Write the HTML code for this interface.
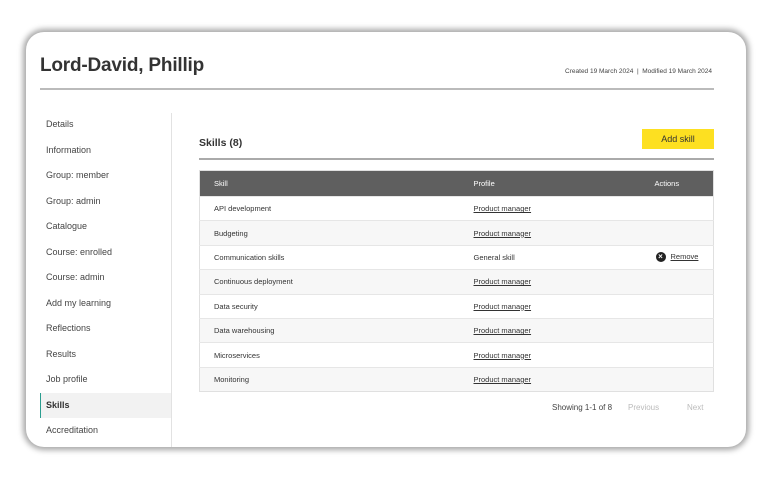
<!DOCTYPE html>
<html><head><meta charset="utf-8"><style>
*{margin:0;padding:0;box-sizing:border-box}
body{width:780px;height:478px;background:#fff;font-family:"Liberation Sans",sans-serif;color:#333;position:relative;overflow:hidden}
.card{position:absolute;left:26px;top:32px;width:720px;height:415px;background:#fff;border-radius:18px;box-shadow:0 0 6px 3px rgba(0,0,0,.35);overflow:hidden}
h1{position:absolute;left:14px;top:23px;font-size:19px;font-weight:bold;color:#333;letter-spacing:-0.2px}
.meta{position:absolute;right:34px;top:36px;font-size:6.5px;color:#444}
.hr{position:absolute;left:14px;width:674px;height:2px;background:#bbb;top:56px}
.nav{position:absolute;left:14px;top:80px;width:131px}
.nav div{height:25.5px;line-height:25.5px;padding-left:6px;font-size:9px;color:#444}
.nav .on{background:#f2f2f2;border-left:1.5px solid #2a9d8f;font-weight:bold;color:#333;padding-left:5px}
.vdiv{position:absolute;left:145px;top:81px;width:1px;height:340px;background:#e2e2e2}
.sk{position:absolute;left:173px;top:105px;font-size:10.5px;font-weight:bold;color:#333}
.btn{position:absolute;left:616px;top:97px;width:72px;height:20px;background:#fde021;font-size:9px;text-align:center;line-height:20px;color:#333}
.hr2{position:absolute;left:173px;top:126px;width:515px;height:2px;background:#aaa}
table{position:absolute;left:173px;top:138px;width:515px;border-collapse:collapse;font-size:7.5px;border:1px solid #e0e0e0;table-layout:fixed;white-space:nowrap}
th{background:#5f5f5f;color:#fff;font-weight:normal;height:26px;text-align:left}
td{height:24.4px;border-top:1px solid #e6e6e6;color:#333}
tr:nth-child(odd) td{background:#f7f7f7}
.c1{padding-left:14px;width:274px}
.c2{width:167px}
.c3{padding-left:0}
u{text-decoration:underline}
.x{display:inline-block;width:10px;height:10px;border-radius:50%;background:#222;color:#fff;font-size:8px;line-height:10px;text-align:center;vertical-align:middle;margin-right:5px;font-weight:bold}
.pg{position:absolute;top:371px;font-size:8px;color:#444}
</style></head><body>
<div class="card">
<h1>Lord-David, Phillip</h1>
<div class="meta">Created 19 March 2024 &nbsp;|&nbsp; Modified 19 March 2024</div>
<div class="hr"></div>
<div class="nav">
<div>Details</div><div>Information</div><div>Group: member</div><div>Group: admin</div><div>Catalogue</div><div>Course: enrolled</div><div>Course: admin</div><div>Add my learning</div><div>Reflections</div><div>Results</div><div>Job profile</div><div class="on">Skills</div><div>Accreditation</div>
</div>
<div class="vdiv"></div>
<div class="sk">Skills (8)</div>
<div class="btn">Add skill</div>
<div class="hr2"></div>
<table>
<colgroup><col style="width:274px"><col style="width:170px"><col></colgroup>
<tr><th class="c1">Skill</th><th>Profile</th><th style="padding-left:11px">Actions</th></tr>
<tr><td class="c1">API development</td><td><u>Product manager</u></td><td></td></tr>
<tr><td class="c1">Budgeting</td><td><u>Product manager</u></td><td></td></tr>
<tr><td class="c1">Communication skills</td><td>General skill</td><td style="padding-left:12px"><span class="x">×</span><u>Remove</u></td></tr>
<tr><td class="c1">Continuous deployment</td><td><u>Product manager</u></td><td></td></tr>
<tr><td class="c1">Data security</td><td><u>Product manager</u></td><td></td></tr>
<tr><td class="c1">Data warehousing</td><td><u>Product manager</u></td><td></td></tr>
<tr><td class="c1">Microservices</td><td><u>Product manager</u></td><td></td></tr>
<tr><td class="c1">Monitoring</td><td><u>Product manager</u></td><td></td></tr>
</table>
<div class="pg" style="left:526px">Showing 1-1 of 8</div>
<div class="pg" style="left:602px;color:#bbb">Previous</div>
<div class="pg" style="left:661px;color:#bbb">Next</div>
</div>
</body></html>
